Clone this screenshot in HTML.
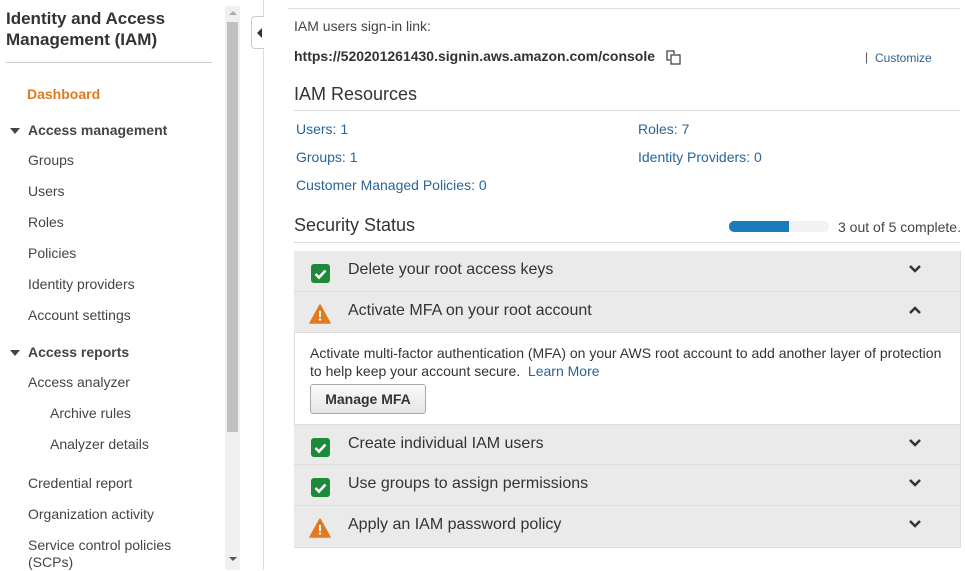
<!DOCTYPE html>
<html><head><style>
*{margin:0;padding:0;box-sizing:border-box}
body{width:965px;height:570px;overflow:hidden;background:#fff;font-family:"Liberation Sans",Arial,sans-serif;position:relative;color:#333}
.a{position:absolute;white-space:nowrap}
.nav{font-size:14px;color:#444}
.lnk{color:#2a6496;font-size:14px}
.row{position:absolute;left:294px;width:666px;height:41px;background:#eaeaea;border-bottom:1px solid #ddd}
.row span{position:absolute;left:54px;top:10px;font-size:16px;color:#333}
.chk{position:absolute;left:17px;top:13px;width:19px;height:19px;background:#1d8a3a;border-radius:3px}
.chev{position:absolute;left:614px;top:13px}
</style></head><body>
<div class="a" style="left:6px;top:8px;font-size:17px;font-weight:bold;line-height:21px;color:#333">Identity and Access<br>Management (IAM)</div>
<div class="a" style="left:6px;top:62px;width:206px;border-top:1px solid #ccc"></div>
<div class="a" style="left:27px;top:86px;font-size:14px;font-weight:bold;color:#e07b1f">Dashboard</div>
<div class="a" style="left:10px;top:128px;width:0;height:0;border-left:5px solid transparent;border-right:5px solid transparent;border-top:6px solid #444"></div>
<div class="a nav" style="left:28px;top:122px;font-weight:bold">Access management</div>
<div class="a nav" style="left:28px;top:152px">Groups</div>
<div class="a nav" style="left:28px;top:183px">Users</div>
<div class="a nav" style="left:28px;top:214px">Roles</div>
<div class="a nav" style="left:28px;top:245px">Policies</div>
<div class="a nav" style="left:28px;top:276px">Identity providers</div>
<div class="a nav" style="left:28px;top:307px">Account settings</div>
<div class="a" style="left:10px;top:350px;width:0;height:0;border-left:5px solid transparent;border-right:5px solid transparent;border-top:6px solid #444"></div>
<div class="a nav" style="left:28px;top:344px;font-weight:bold">Access reports</div>
<div class="a nav" style="left:28px;top:374px">Access analyzer</div>
<div class="a nav" style="left:50px;top:405px">Archive rules</div>
<div class="a nav" style="left:50px;top:436px">Analyzer details</div>
<div class="a nav" style="left:28px;top:475px">Credential report</div>
<div class="a nav" style="left:28px;top:506px">Organization activity</div>
<div class="a nav" style="left:28px;top:537px;line-height:17px">Service control policies<br>(SCPs)</div>
<div class="a" style="left:225px;top:6px;width:15px;height:564px;background:#f0f0f0"></div>
<div class="a" style="left:227px;top:22px;width:11px;height:410px;background:#c1c1c1"></div>
<div class="a" style="left:229px;top:11px;border-left:4px solid transparent;border-right:4px solid transparent;border-bottom:4px solid #aaa"></div>
<div class="a" style="left:229px;top:557px;border-left:4px solid transparent;border-right:4px solid transparent;border-top:4px solid #555"></div>
<div class="a" style="left:263px;top:0;height:570px;border-left:1px solid #ddd"></div>
<div class="a" style="left:251px;top:16px;width:13px;height:33px;border:1px solid #ccc;border-right:none;border-radius:4px 0 0 4px;background:#fff"></div>
<div class="a" style="left:257px;top:28px;border-top:5px solid transparent;border-bottom:5px solid transparent;border-right:5px solid #333"></div>
<div class="a" style="left:288px;top:8px;width:672px;border-top:1px solid #ddd"></div>
<div class="a" style="left:294px;top:18px;font-size:14px;color:#444">IAM users sign-in link:</div>
<div class="a" style="left:294px;top:48px;font-size:14px;font-weight:bold;color:#333">https://520201261430.signin.aws.amazon.com/console</div>
<svg class="a" style="left:665px;top:49px" width="17" height="17" viewBox="0 0 17 17" fill="none" stroke="#444" stroke-width="1.3"><path d="M5 11H2V2h7v3"/><rect x="6" y="6" width="9" height="9"/></svg>
<div class="a" style="left:865px;top:50px;font-size:12px;color:#555">|</div>
<div class="a" style="left:875px;top:51px;font-size:12px;color:#2a6496">Customize</div>
<div class="a" style="left:294px;top:84px;font-size:18px;color:#333">IAM Resources</div>
<div class="a" style="left:294px;top:110px;width:666px;border-top:1px solid #ddd"></div>
<div class="a lnk" style="left:296px;top:121px">Users: 1</div>
<div class="a lnk" style="left:638px;top:121px">Roles: 7</div>
<div class="a lnk" style="left:296px;top:149px">Groups: 1</div>
<div class="a lnk" style="left:638px;top:149px">Identity Providers: 0</div>
<div class="a lnk" style="left:296px;top:177px">Customer Managed Policies: 0</div>
<div class="a" style="left:294px;top:215px;font-size:18px;color:#333">Security Status</div>
<div class="a" style="left:729px;top:221px;width:100px;height:11px;background:#f2f2f2;border-radius:5px"></div>
<div class="a" style="left:729px;top:221px;width:60px;height:11px;background:#1a7bbd;border-radius:5px 0 0 5px"></div>
<div class="a" style="left:838px;top:219px;font-size:14px;color:#444">3 out of 5 complete.</div>
<div class="a" style="left:294px;top:242px;width:666px;border-top:1px solid #ddd"></div>
<div class="a" style="left:294px;top:251px;width:667px;height:297px;border:1px solid #ddd;background:#fff"></div>
<svg width="0" height="0" style="position:absolute"><defs>
<symbol id="ck" viewBox="0 0 19 19"><rect width="19" height="19" rx="3" fill="#1d8a3a"/><path d="M4.5 10l3.5 3.5 6.5-7" stroke="#fff" stroke-width="2.6" fill="none"/></symbol>
<symbol id="wr" viewBox="0 0 22 20"><path d="M11 1L21 19H1z" fill="#e07b1f" stroke="#e07b1f" stroke-linejoin="round" stroke-width="1.5"/><rect x="10" y="7" width="2" height="6" fill="#fff"/><rect x="10" y="14.5" width="2" height="2" fill="#fff"/></symbol>
<symbol id="dn" viewBox="0 0 14 10"><path d="M2 2l5 5 5-5" stroke="#333" stroke-width="2.5" fill="none"/></symbol>
<symbol id="up" viewBox="0 0 14 10"><path d="M2 8l5-5 5 5" stroke="#333" stroke-width="2.5" fill="none"/></symbol>
</defs></svg>
<div class="row" style="top:251px"><svg class="a" style="left:17px;top:13px" width="19" height="19"><use href="#ck"/></svg><span>Delete your root access keys</span><svg class="chev" width="14" height="10"><use href="#dn"/></svg></div>
<div class="row" style="top:292px"><svg class="a" style="left:15px;top:12px" width="22" height="20"><use href="#wr"/></svg><span>Activate MFA on your root account</span><svg class="chev" width="14" height="10"><use href="#up"/></svg></div>
<div class="a" style="left:310px;top:344px;font-size:14px;line-height:18px;color:#333">Activate multi-factor authentication (MFA) on your AWS root account to add another layer of protection<br>to help keep your account secure.&nbsp; <span style="color:#2a6496">Learn More</span></div>
<div class="a" style="left:310px;top:384px;width:116px;height:30px;border:1px solid #aaa;border-radius:3px;background:linear-gradient(#fafafa,#e6e6e6);font-size:14px;font-weight:bold;text-align:center;line-height:28px;color:#333">Manage MFA</div>
<div class="row" style="top:424px;border-top:1px solid #ddd"><svg class="a" style="left:17px;top:13px" width="19" height="19"><use href="#ck"/></svg><span>Create individual IAM users</span><svg class="chev" width="14" height="10"><use href="#dn"/></svg></div>
<div class="row" style="top:465px"><svg class="a" style="left:17px;top:13px" width="19" height="19"><use href="#ck"/></svg><span>Use groups to assign permissions</span><svg class="chev" width="14" height="10"><use href="#dn"/></svg></div>
<div class="row" style="top:506px;height:42px"><svg class="a" style="left:15px;top:12px" width="22" height="20"><use href="#wr"/></svg><span>Apply an IAM password policy</span><svg class="chev" width="14" height="10"><use href="#dn"/></svg></div>
</body></html>
